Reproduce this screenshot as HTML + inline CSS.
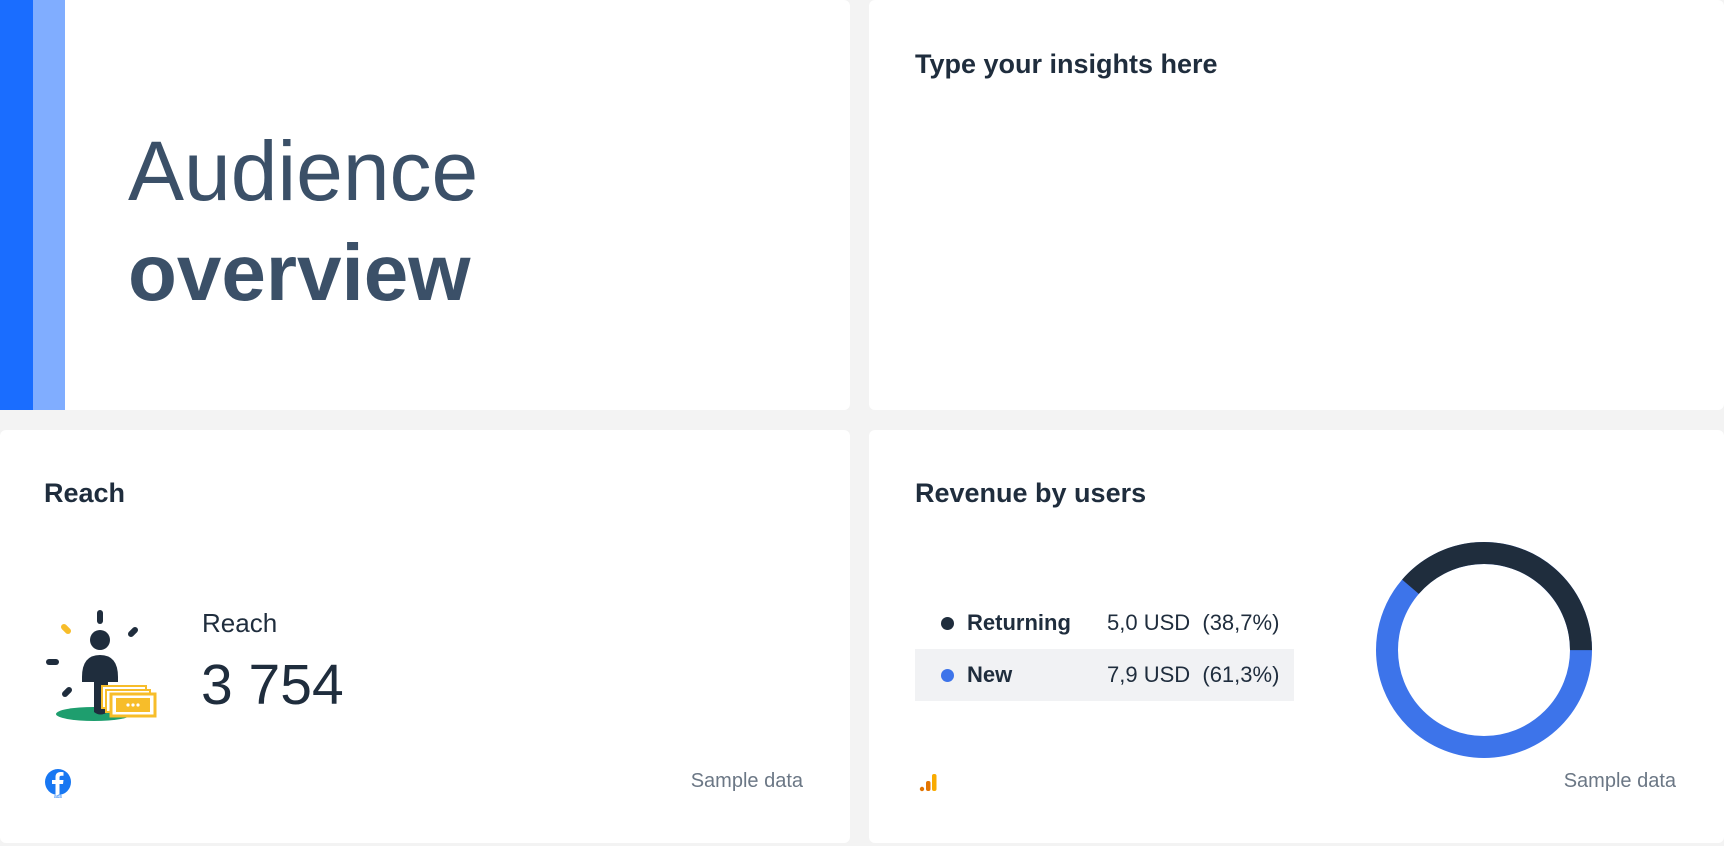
<!DOCTYPE html>
<html><head><meta charset="utf-8"><style>
*{margin:0;padding:0;box-sizing:border-box}
body{width:1724px;height:846px;background:#f3f3f3;font-family:"Liberation Sans",Arial,sans-serif;position:relative;overflow:hidden;color:#1f2d3d}
.card{position:absolute;background:#fff;border-radius:6px;overflow:hidden}
.t{position:absolute;font-weight:bold;font-size:27px;color:#1f2d3d;white-space:nowrap}
.abs{position:absolute;white-space:nowrap}
.sd{position:absolute;font-size:20px;color:#6b7785}
</style></head><body>
<div class="card" style="left:0;top:0;width:850px;height:410px;border-radius:0 6px 6px 0">
  <div style="position:absolute;left:0;top:0;width:33px;height:410px;background:#1a6dff"></div>
  <div style="position:absolute;left:33px;top:0;width:32px;height:410px;background:#80adff"></div>
  <div class="abs" style="left:128px;top:124px;font-size:84px;line-height:94px;color:#3b5068">Audience</div>
  <div class="abs" style="left:128px;top:226px;font-size:80px;line-height:94px;color:#3b5068;font-weight:bold">overview</div>
</div>
<div class="card" style="left:869px;top:0;width:855px;height:410px">
  <div class="t" style="left:46px;top:49px">Type your insights here</div>
</div>
<div class="card" style="left:0;top:430px;width:850px;height:413px">
  <div class="t" style="left:44px;top:48px">Reach</div>
  <svg class="abs" style="left:44px;top:177px" width="114" height="116" viewBox="0 0 114 116">
    <ellipse cx="50" cy="107" rx="38" ry="7" fill="#1e9e6e"/>
    <line x1="56" y1="6" x2="56" y2="14" stroke="#1f2d3d" stroke-width="6" stroke-linecap="round"/>
    <line x1="20" y1="20" x2="24" y2="24" stroke="#f7bd2a" stroke-width="6" stroke-linecap="round"/>
    <line x1="91" y1="23" x2="87" y2="27" stroke="#1f2d3d" stroke-width="6" stroke-linecap="round"/>
    <line x1="5" y1="55" x2="12" y2="55" stroke="#1f2d3d" stroke-width="6" stroke-linecap="round"/>
    <line x1="21" y1="87" x2="25" y2="83" stroke="#1f2d3d" stroke-width="6" stroke-linecap="round"/>
    <circle cx="56" cy="33" r="10" fill="#1f2d3d"/>
    <path d="M38 70 Q38 48 56 48 Q74 48 74 70 L74 75 L64 75 L64 105 Q56 110 50 105 L50 75 L38 75Z" fill="#1f2d3d"/>
    <rect x="58" y="79" width="44" height="22" fill="#fff" stroke="#f7bd2a" stroke-width="2"/>
    <rect x="62" y="83" width="44" height="22" fill="#fff" stroke="#f7bd2a" stroke-width="2"/>
    <rect x="67" y="87" width="44" height="22" fill="#fff" stroke="#f7bd2a" stroke-width="3"/>
    <rect x="72" y="91" width="34" height="14" fill="#f7bd2a"/>
    <circle cx="84" cy="98" r="1.6" fill="#fff"/><circle cx="89" cy="98" r="1.6" fill="#fff"/><circle cx="94" cy="98" r="1.6" fill="#fff"/>
  </svg>
  <div class="abs" style="left:202px;top:178px;font-size:26px;color:#1f2d3d">Reach</div>
  <div class="abs" style="left:201px;top:222px;font-size:57px;color:#1f2d3d">3 754</div>
  <svg class="abs" style="left:44px;top:339px" width="30" height="30" viewBox="0 0 30 30">
    <circle cx="14" cy="13" r="13" fill="#1877f2"/>
    <path d="M15.5 26V15h3.5l.5-4h-4V8.5c0-1.1.4-1.8 1.9-1.8h2.1V3.2c-.4 0-1.6-.2-3-.2-3 0-5 1.8-5 5.1V11H8v4h3.5v11z" fill="#fff"/>
    <text x="14" y="29" font-size="5" fill="#1877f2" text-anchor="middle" font-family="Liberation Sans">ads</text>
  </svg>
  <div class="sd" style="right:47px;top:340px">Sample data</div>
</div>
<div class="card" style="left:869px;top:430px;width:855px;height:413px">
  <div class="t" style="left:46px;top:48px">Revenue by users</div>
  <div class="abs" style="left:46px;top:219px;width:379px;height:52px;background:#f1f2f4"></div>
  <div class="abs" style="left:72px;top:187px;width:13px;height:13px;border-radius:50%;background:#1f2d3d"></div>
  <div class="abs" style="left:98px;top:180px;font-size:22px;font-weight:bold;color:#1f2d3d">Returning</div>
  <div class="abs" style="left:238px;top:180px;font-size:22px;color:#1f2d3d">5,0 USD&nbsp; (38,7%)</div>
  <div class="abs" style="left:72px;top:239px;width:13px;height:13px;border-radius:50%;background:#3d74ea"></div>
  <div class="abs" style="left:98px;top:232px;font-size:22px;font-weight:bold;color:#1f2d3d">New</div>
  <div class="abs" style="left:238px;top:232px;font-size:22px;color:#1f2d3d">7,9 USD&nbsp; (61,3%)</div>
  <svg class="abs" style="left:505px;top:110px" width="220" height="220" viewBox="0 0 220 220">
    <circle cx="110" cy="110" r="97" fill="none" stroke="#3d74ea" stroke-width="22"/>
    <circle cx="110" cy="110" r="97" fill="none" stroke="#1f2d3d" stroke-width="22" stroke-dasharray="235.9 1000" transform="rotate(-139.3 110 110)"/>
  </svg>
  <svg class="abs" style="left:50px;top:343px" width="20" height="20" viewBox="0 0 20 20">
    <circle cx="3" cy="16" r="2.2" fill="#e37400"/>
    <rect x="7" y="8" width="4.5" height="10" rx="2" fill="#e37400"/>
    <rect x="13" y="1" width="4.5" height="17" rx="2" fill="#f9ab00"/>
  </svg>
  <div class="sd" style="right:48px;top:340px">Sample data</div>
</div>
</body></html>
